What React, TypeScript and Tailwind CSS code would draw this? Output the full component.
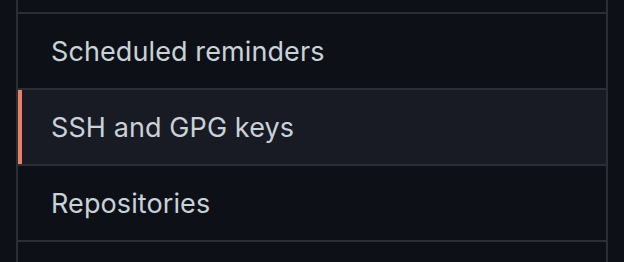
export default function App() {
  const rows = [
    { label: "Scheduled reminders", active: false },
    { label: "SSH and GPG keys", active: true },
    { label: "Repositories", active: false },
  ];

  return (
    <div
      className="w-[624px] h-[262px] overflow-hidden bg-[#0d1117] pl-4 pr-4"
      style={{ fontFamily: "Inter, 'Noto Sans', sans-serif" }}
    >
      <div className="flex flex-col h-full border-l-2 border-r-2 border-[#2a2e35] bg-[#0d1117]">
        <div className="h-[12px] shrink-0" />
        {rows.map((row) => (
          <div
            key={row.label}
            className={`relative flex items-center h-[76px] shrink-0 border-t-2 border-[#2a2e35] pl-[33px] pt-[2px] ${
              row.active ? "bg-[#181b23]" : ""
            }`}
          >
            {row.active && <span className="absolute left-0 top-0 bottom-0 w-[4px] bg-[#ec8066]" />}
            <span className="text-[27px] text-[#c9d1d9] tracking-[0.1px]">{row.label}</span>
          </div>
        ))}
        <div className="flex-1 border-t-2 border-[#2a2e35]" />
      </div>
    </div>
  );
}
